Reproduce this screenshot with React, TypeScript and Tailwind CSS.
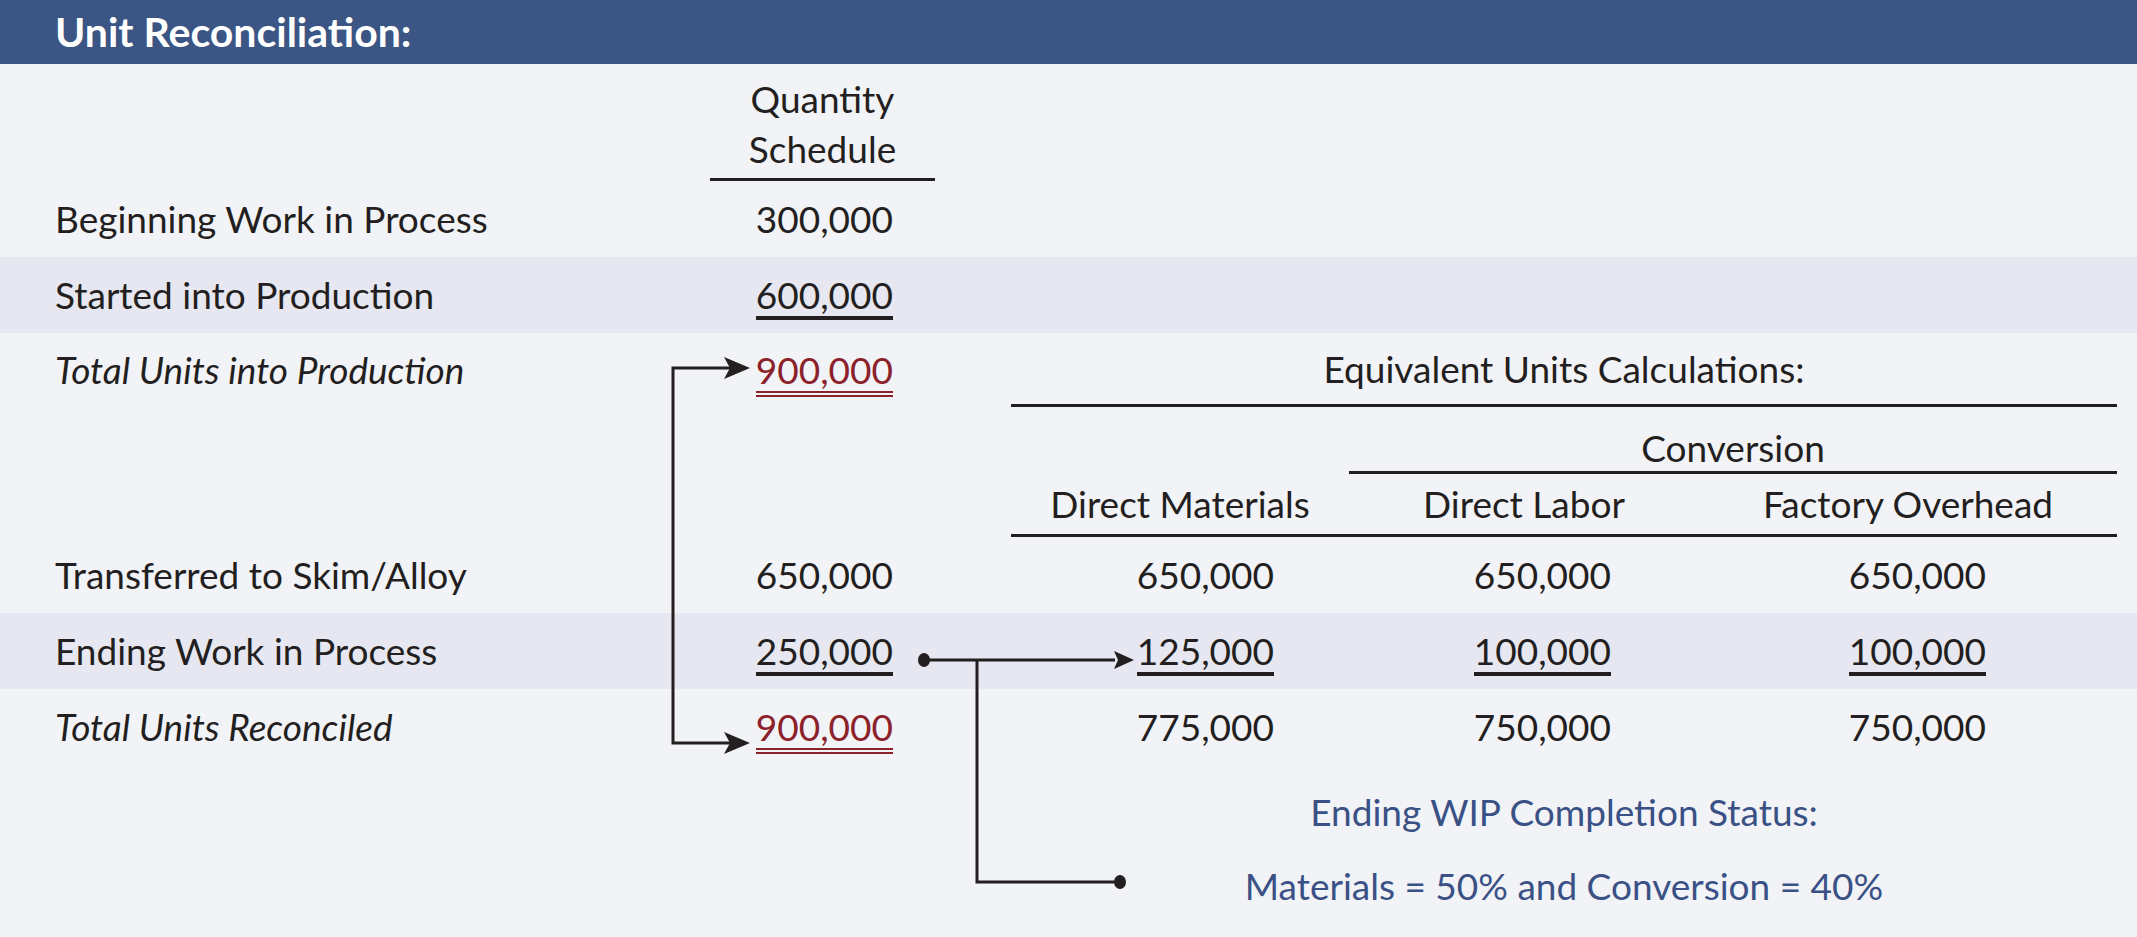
import React from 'react';

const ink = 'text-[#231f20]';

function Num({ v, kind }: { v: string; kind?: 'single' | 'double' }) {
  if (kind === 'single')
    return <span className="inline-block border-b-[4px] border-[#231f20] leading-[42px]">{v}</span>;
  if (kind === 'double')
    return (
      <span className="inline-block border-b-[6px] border-double border-[#8b2129] leading-[42px] text-[#8b2129]">
        {v}
      </span>
    );
  return <span className="leading-[42px]">{v}</span>;
}

function Row({
  label,
  italic,
  striped,
  cells,
}: {
  label: string;
  italic?: boolean;
  striped?: boolean;
  cells: React.ReactNode[];
}) {
  return (
    <div className={`flex h-[76px] items-center ${striped ? 'bg-[#e6e7f0]' : ''}`}>
      <div className={`w-[600px] pl-[55px] ${italic ? 'italic' : ''}`}>{label}</div>
      <div className="w-[293px] text-right">{cells[0]}</div>
      <div className="w-[381px] text-right">{cells[1]}</div>
      <div className="w-[337px] text-right">{cells[2]}</div>
      <div className="w-[375px] text-right">{cells[3]}</div>
    </div>
  );
}

export default function App() {
  return (
    <div
      className={`relative h-[937px] w-[2137px] overflow-hidden bg-[#f2f3f7] text-[37px] ${ink}`}
      style={{ fontFamily: 'Lato, "Liberation Sans", sans-serif' }}
    >
      <div className="flex h-[64px] items-center bg-[#3b5584] pl-[55px] text-[41px] font-bold text-white">
        Unit Reconciliation:
      </div>

      <div className="flex h-[117px] pl-[710px]">
        <div className="flex w-[225px] flex-col items-center justify-end border-b-[3px] border-[#231f20] pb-[4px] leading-[50px]">
          <div>Quantity</div>
          <div>Schedule</div>
        </div>
      </div>

      <Row label="Beginning Work in Process" cells={[<Num v="300,000" />]} />
      <Row label="Started into Production" striped cells={[<Num v="600,000" kind="single" />]} />
      <div className="flex h-[74px] items-center">
        <div className="w-[600px] pl-[55px] italic">Total Units into Production</div>
        <div className="w-[293px] text-right">
          <Num v="900,000" kind="double" />
        </div>
        <div className="ml-[118px] flex h-full w-[1106px] flex-col items-center justify-center border-b-[3px] border-[#231f20]">
          Equivalent Units Calculations:
        </div>
      </div>

      <div className="ml-[1011px] flex w-[1106px] flex-col border-b-[3px] border-[#231f20]">
        <div className="ml-[338px] mt-[22px] flex h-[45px] items-center justify-center border-b-[3px] border-[#231f20] pb-[4px]">
          Conversion
        </div>
        <div className="flex h-[60px] items-center">
          <div className="w-[338px] text-center">Direct Materials</div>
          <div className="w-[350px] text-center">Direct Labor</div>
          <div className="flex-1 text-center">Factory Overhead</div>
        </div>
      </div>

      <Row
        label="Transferred to Skim/Alloy"
        cells={[<Num v="650,000" />, <Num v="650,000" />, <Num v="650,000" />, <Num v="650,000" />]}
      />
      <Row
        label="Ending Work in Process"
        striped
        cells={[
          <Num v="250,000" kind="single" />,
          <Num v="125,000" kind="single" />,
          <Num v="100,000" kind="single" />,
          <Num v="100,000" kind="single" />,
        ]}
      />
      <Row
        label="Total Units Reconciled"
        italic
        cells={[<Num v="900,000" kind="double" />, <Num v="775,000" />, <Num v="750,000" />, <Num v="750,000" />]}
      />

      <div className="ml-[1011px] flex w-[1106px] flex-col items-center pt-[10px] text-[#3a5186]">
        <div className="leading-[74px]">Ending WIP Completion Status:</div>
        <div className="leading-[74px]">Materials = 50% and Conversion = 40%</div>
      </div>

      <svg className="pointer-events-none absolute left-0 top-0" width="2137" height="937">
        <g stroke="#231f20" strokeWidth="3" fill="none">
          <polyline points="730,368 673,368 673,743 730,743" />
          <line x1="924" y1="660" x2="1115" y2="660" />
          <polyline points="977,660 977,882 1118,882" />
        </g>
        <g fill="#231f20">
          <polygon points="750,368 724,357 730,368 724,379" />
          <polygon points="750,743 724,732 730,743 724,754" />
          <polygon points="1134,660 1114,651 1118,660 1114,669" />
          <ellipse cx="924" cy="660" rx="6" ry="7" />
          <ellipse cx="1120" cy="882" rx="6" ry="7" />
        </g>
      </svg>
    </div>
  );
}
